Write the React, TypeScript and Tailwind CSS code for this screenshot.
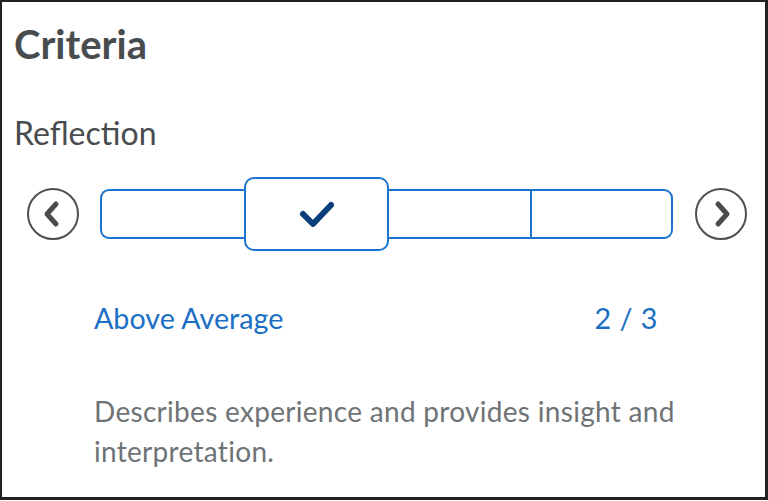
import React from "react";

const Chevron = ({ dir }: { dir: "left" | "right" }) => {
  return (
    <div className="flex h-[52px] w-[52px] shrink-0 items-center justify-center rounded-full border-2 border-[#4f4f4f]">
      <svg width="24" height="28" viewBox="0 0 24 28">
        <path
          d={dir === "left" ? "M15 4 L6 14 L15 24" : "M9 4 L18 14 L9 24"}
          fill="none"
          stroke="#4a4b4d"
          strokeWidth="5"
          strokeLinecap="round"
          strokeLinejoin="round"
        />
      </svg>
    </div>
  );
};

const App = () => {
  return (
    <div
      className="box-border h-[500px] w-[768px] overflow-hidden border-2 border-r-[3px] border-b-[3px] border-[#222] bg-white pl-3 pt-[18px]"
      style={{ fontFamily: "Lato, 'Open Sans', sans-serif" }}
    >
      <div className="text-[40px] font-bold leading-[48px] text-[#494c4e]">Criteria</div>
      <div className="mt-[46px] text-[32px] leading-[38px] text-[#494c4e]">Reflection</div>

      <div className="mt-[25px] flex items-center pl-[13px]">
        <Chevron dir="left" />
        <div className="ml-[21px] flex h-[74px] w-[573px] items-center">
          <div className="h-[50px] w-[144px] rounded-l-[9px] border-2 border-r-0 border-[#1a73cf]" />
          <div className="flex h-[74px] w-[145px] items-center justify-center rounded-[10px] border-2 border-[#1a73cf] bg-white">
            <svg width="38" height="30" viewBox="0 0 38 30">
              <path
                d="M5 15 L15 25 L33 6"
                fill="none"
                stroke="#0b3f7c"
                strokeWidth="6"
                strokeLinecap="round"
                strokeLinejoin="round"
              />
            </svg>
          </div>
          <div className="h-[50px] w-[143px] border-2 border-l-0 border-[#1a73cf]" />
          <div className="h-[50px] w-[141px] rounded-r-[9px] border-2 border-l-0 border-[#1a73cf]" />
        </div>
        <div className="ml-[22px]">
          <Chevron dir="right" />
        </div>
      </div>

      <div className="ml-[80px] mt-[50px] flex w-[564px] items-center justify-between text-[28.7px] leading-[35px] text-[#1a6fc4]">
        <span>Above Average</span>
        <span className="tracking-[0.5px]">2 / 3</span>
      </div>

      <div className="ml-[80px] mt-[55px] w-[620px] text-[28px] leading-[40px] tracking-[0.3px] text-[#6e7376]">
        Describes experience and provides insight and interpretation.
      </div>
    </div>
  );
};

export default App;
